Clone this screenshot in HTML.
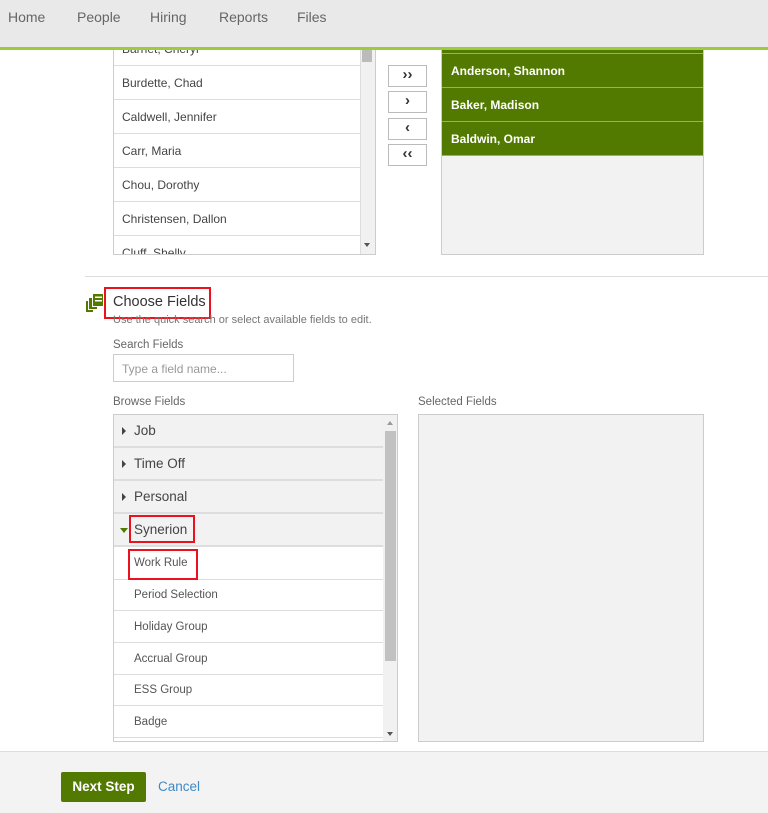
<!DOCTYPE html>
<html><head><meta charset="utf-8"><style>
*{margin:0;padding:0;box-sizing:border-box}
body{width:768px;height:813px;position:relative;overflow:hidden;background:#fff;font-family:"Liberation Sans",sans-serif;color:#444}
.a{position:absolute}
.nav{left:0;top:0;width:768px;height:50px;background:#e9e9e9;border-bottom:3px solid #9ccc3c}
.nav span{position:absolute;top:9px;font-size:14px;color:#666}
.row{position:absolute;left:0;width:100%;border-bottom:1px solid #ddd;font-size:12px;padding-left:8px;display:flex;align-items:center}
.btn{position:absolute;left:388px;width:39px;height:22px;border:1px solid #bbb;background:#fff;font-size:15px;text-align:center;line-height:18px;color:#333;font-weight:bold}
.g{position:absolute;left:0;width:100%;background:#527a00;color:#fff;font-size:12px;font-weight:bold;padding-left:9px;display:flex;align-items:center;border-bottom:1px solid #9ab06a}
.fr{position:absolute;left:0;width:269px;border-bottom:1px solid #ddd;display:flex;align-items:center;padding-left:20px;font-size:11.5px;color:#555}
.fr.h{background:#f2f2f2;font-size:13.5px;color:#444;border-bottom:2px solid #ddd}
.tri{position:absolute;left:8px;width:0;height:0;border-top:4px solid transparent;border-bottom:4px solid transparent;border-left:4px solid #444}
.red{position:absolute;border:2px solid #e8131d}
</style></head><body>
<div class="a nav"><span style="left:8px">Home</span><span style="left:77px">People</span><span style="left:150px">Hiring</span><span style="left:219px">Reports</span><span style="left:297px">Files</span></div>

<div class="a" style="left:113px;top:50px;width:263px;height:205px;border:1px solid #ccc;border-top:none;overflow:hidden">
 <div class="row" style="top:-18px;height:34px">Barnet, Cheryl</div>
 <div class="row" style="top:16px;height:34px">Burdette, Chad</div>
 <div class="row" style="top:50px;height:34px">Caldwell, Jennifer</div>
 <div class="row" style="top:84px;height:34px">Carr, Maria</div>
 <div class="row" style="top:118px;height:34px">Chou, Dorothy</div>
 <div class="row" style="top:152px;height:34px">Christensen, Dallon</div>
 <div class="row" style="top:186px;height:34px">Cluff, Shelly</div>
 <div class="a" style="left:246px;top:0;width:15px;height:205px;background:#f1f1f1;border-left:1px solid #ddd"></div>
 <div class="a" style="left:248px;top:0;width:10px;height:12px;background:#bbb"></div>
 <div class="a" style="left:250px;top:193px;width:0;height:0;border-left:3px solid transparent;border-right:3px solid transparent;border-top:4px solid #555"></div>
</div>
<div class="btn" style="top:65px">&rsaquo;&rsaquo;</div>
<div class="btn" style="top:91px">&rsaquo;</div>
<div class="btn" style="top:118px">&lsaquo;</div>
<div class="btn" style="top:144px">&lsaquo;&lsaquo;</div>
<div class="a" style="left:441px;top:50px;width:263px;height:205px;border:1px solid #ccc;border-top:none;background:#f2f2f2;overflow:hidden">
 <div class="g" style="top:0;height:4px"></div>
 <div class="g" style="top:4px;height:34px">Anderson, Shannon</div>
 <div class="g" style="top:38px;height:34px">Baker, Madison</div>
 <div class="g" style="top:72px;height:34px">Baldwin, Omar</div>
</div>

<div class="a" style="left:85px;top:276px;width:683px;height:1px;background:#ddd"></div>
<svg class="a" style="left:85px;top:293px" width="19" height="21" viewBox="0 0 19 21">
<rect x="0.5" y="7.5" width="8" height="12" fill="#527a00" stroke="#fff"/>
<rect x="3.5" y="4.5" width="9" height="12" fill="#527a00" stroke="#fff"/>
<rect x="7.5" y="0.5" width="11" height="13" fill="#527a00" stroke="#fff"/>
<rect x="10" y="3.5" width="7" height="1.5" fill="#fff"/><rect x="10" y="7" width="7" height="1.5" fill="#fff"/></svg>
<div class="red" style="left:104px;top:287px;width:107px;height:32px"></div>
<div class="a" style="left:113px;top:294px;font-size:14.5px;color:#333">Choose Fields</div>
<div class="a" style="left:113px;top:314px;font-size:11px;color:#777">Use the quick search or select available fields to edit.</div>
<div class="a" style="left:113px;top:339px;font-size:11.5px;color:#666">Search Fields</div>
<div class="a" style="left:113px;top:354px;width:181px;height:28px;border:1px solid #ccc;font-size:12px;color:#999;padding:7px 0 0 8px">Type a field name...</div>
<div class="a" style="left:113px;top:396px;font-size:11.5px;color:#666">Browse Fields</div>
<div class="a" style="left:418px;top:396px;font-size:11.5px;color:#666">Selected Fields</div>

<div class="a" style="left:113px;top:414px;width:285px;height:328px;border:1px solid #ccc;overflow:hidden">
 <div class="fr h" style="top:0;height:33px"><i class="tri"></i>Job</div>
 <div class="fr h" style="top:33px;height:33px"><i class="tri"></i>Time Off</div>
 <div class="fr h" style="top:66px;height:33px"><i class="tri"></i>Personal</div>
 <div class="fr h" style="top:99px;height:33px"><i class="tri" style="left:6px;top:14px;border-left:4px solid transparent;border-right:4px solid transparent;border-top:5px solid #527a00;border-bottom:0"></i>Synerion</div>
 <div class="fr" style="top:132px;height:33px">Work Rule</div>
 <div class="fr" style="top:165px;height:31px">Period Selection</div>
 <div class="fr" style="top:196px;height:32px">Holiday Group</div>
 <div class="fr" style="top:228px;height:32px">Accrual Group</div>
 <div class="fr" style="top:260px;height:31px">ESS Group</div>
 <div class="fr" style="top:291px;height:32px">Badge</div>
 <div class="a" style="left:269px;top:0;width:15px;height:328px;background:#f1f1f1"></div>
 <div class="a" style="left:271px;top:16px;width:11px;height:230px;background:#c1c1c1"></div>
 <div class="a" style="left:273px;top:6px;width:0;height:0;border-left:3px solid transparent;border-right:3px solid transparent;border-bottom:4px solid #999"></div>
 <div class="a" style="left:273px;top:317px;width:0;height:0;border-left:3px solid transparent;border-right:3px solid transparent;border-top:4px solid #555"></div>
</div>
<div class="red" style="left:129px;top:515px;width:66px;height:28px"></div>
<div class="red" style="left:128px;top:549px;width:70px;height:31px"></div>
<div class="a" style="left:418px;top:414px;width:286px;height:328px;border:1px solid #ccc;background:#f2f2f2"></div>

<div class="a" style="left:0;top:751px;width:768px;height:62px;background:#f3f3f3;border-top:1px solid #ddd"></div>
<div class="a" style="left:61px;top:772px;width:85px;height:30px;background:#527a00;border-radius:2px;color:#fff;font-weight:bold;font-size:13.5px;text-align:center;line-height:30px">Next Step</div>
<div class="a" style="left:158px;top:779px;font-size:13.5px;color:#3f8ac6">Cancel</div>
</body></html>
